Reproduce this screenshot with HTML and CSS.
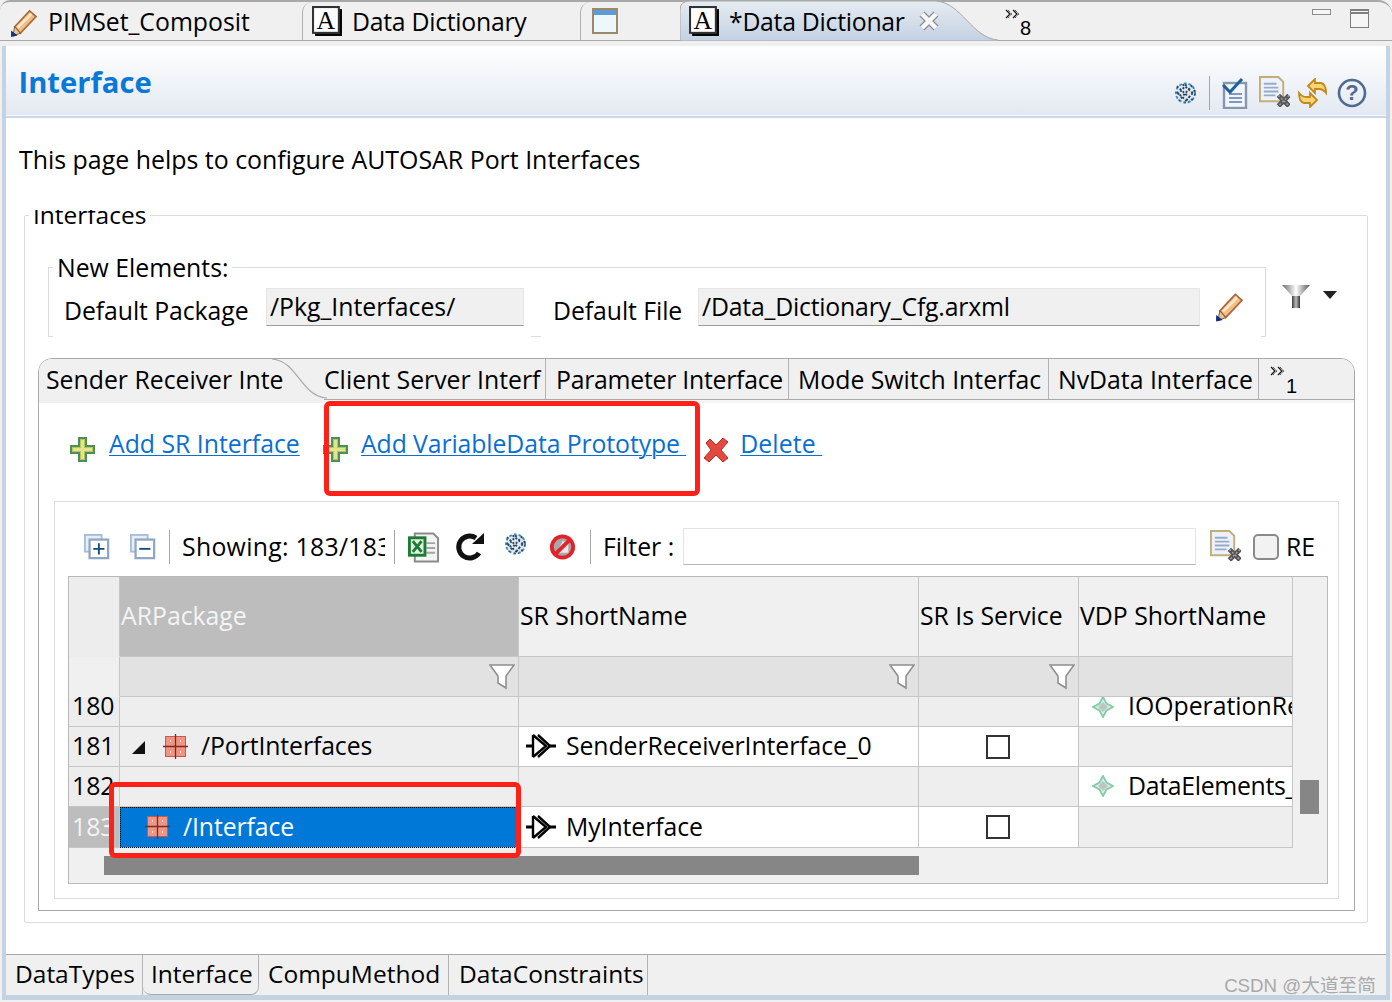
FILE: index.html
```html
<!DOCTYPE html>
<html lang="en">
<head>
<meta charset="utf-8">
<title>Interface</title>
<link rel="stylesheet" href="styles.css">
</head>
<body>
<svg class="defs" width="0" height="0" aria-hidden="true">
  <defs>
    <symbol id="pencil" viewBox="0 0 28 30">
      <path d="M4 19 L20 2 L27 8 L10 26 Z" fill="#f3bd83" stroke="#a8683c" stroke-width="1.800"/>
      <path d="M7 20 L22 5" stroke="#fde6c6" stroke-width="3"/>
      <path d="M4 19 L10 26 L2 29 Z" fill="#e8c690" stroke="#7a5a30"/>
      <path d="M1 29 L1 25 L5 28 Z" fill="#10307f" stroke="#10307f" stroke-width="1.800"/>
    </symbol>
    <symbol id="plus" viewBox="0 0 25 25">
      <path d="M9 1 h7 v8 h8 v7 h-8 v8 h-7 v-8 h-8 v-7 h8 Z" fill="#b9c65a" stroke="#4d8f5c" stroke-width="2"/>
      <path d="M12.500 3 v19 M3 12.500 h19" stroke="#e3e58e" stroke-width="3"/>
    </symbol>
    <symbol id="grid" viewBox="0 0 25 25">
      <rect x="2" y="2" width="21" height="21" fill="#c9584d"/>
      <rect x="3" y="3" width="9" height="9" fill="#ef9583"/>
      <rect x="13" y="3" width="9" height="9" fill="#ef9583"/>
      <rect x="3" y="13" width="9" height="9" fill="#ef9583"/>
      <rect x="13" y="13" width="9" height="9" fill="#ef9583"/>
      <path d="M7 7 h1 M17 7 h1 M7 18 h1 M17 18 h1" stroke="#fde0d2" stroke-width="2"/>
      <path d="M12.500 0 V25 M0 12.500 H25" stroke="#7c2a22" stroke-width="1.300"/>
    </symbol>
    <symbol id="port" viewBox="0 0 30 26">
      <path d="M0 13 H7 M22 13 H30" stroke="#000" stroke-width="3"/>
      <path d="M7 2 V24 M7 2 L20 13 L7 24" fill="#fff" stroke="#000" stroke-width="2.400"/>
      <path d="M12 2 L24 13 L12 24" fill="none" stroke="#000" stroke-width="2.400"/>
    </symbol>
    <symbol id="diamond" viewBox="0 0 22 22">
      <path d="M11 1 L14.500 7.500 L21 11 L14.500 14.500 L11 21 L7.500 14.500 L1 11 L7.500 7.500 Z" fill="#e4ebe7" stroke="#7fcfa8" stroke-width="1.800"/>
      <path d="M11 6 L16 11 L11 16 L6 11 Z" fill="#bcc7c0"/>
    </symbol>
    <symbol id="funnel" viewBox="0 0 26 26">
      <path d="M1 1 H25 L17 12 V24 L9 19 V12 Z" fill="#fff" stroke="#8f8f8f" stroke-width="1.600"/>
    </symbol>
    <symbol id="docx" viewBox="0 0 32 32">
      <path d="M1 1 H20 L25 6 V26 H1 Z" fill="#eef2f8" stroke="#c2ad7d" stroke-width="2"/>
      <path d="M5 8 H18 M5 12 H20 M5 16 H20 M5 20 H17" stroke="#98aacb" stroke-width="2"/>
      <path d="M20 20 L31 31 M31 20 L20 31" stroke="#555" stroke-width="5"/>
      <path d="M20 20 L31 31 M31 20 L20 31" stroke="#a0a0a0" stroke-width="1.500" stroke-dasharray="2 2"/>
    </symbol>
    <symbol id="dots" viewBox="0 0 24 24">
      <circle cx="12" cy="12" r="10" fill="#dfe9ef" stroke="#3f8fc4" stroke-width="2" stroke-dasharray="3 2"/>
      <path d="M3 5 L20 20 M9 3 L22 14 M3 11 L15 22 M19 4 L5 20 M13 3 L3 15 M22 9 L11 22" stroke="#27415f" stroke-width="2" stroke-dasharray="2 2"/>
    </symbol>
    <symbol id="chev" viewBox="0 0 15 10">
      <path d="M1 1 L5 5 L1 9 M8 1 L12 5 L8 9" fill="none" stroke="#111" stroke-width="1.200"/>
      <path d="M3 1 L7 5 L3 9 M10 1 L14 5 L10 9" fill="none" stroke="#111" stroke-width="1" stroke-dasharray="1 1"/>
    </symbol>
  </defs>
</svg>

<div class="app">
  <header class="topbar">
    <div class="etab etab-1">
      <svg class="ico-26"><use href="#pencil"/></svg>
      <span class="ttext">PIMSet_Composit</span>
    </div>
    <div class="etab etab-2">
      <svg class="ico-a" viewBox="0 0 30 30"><rect x="3" y="3" width="26" height="26" fill="#000"/><rect x="1" y="1" width="25" height="25" fill="#fff" stroke="#333" stroke-width="2"/><text x="13.500" y="22" class="a-glyph">A</text></svg>
      <span class="ttext ttext-dd">Data Dictionary</span>
    </div>
    <div class="etab etab-3">
      <svg class="ico-win" viewBox="0 0 26 26"><rect x="1" y="1" width="24" height="24" fill="#eef7fc" stroke="#9a8a68" stroke-width="2"/><rect x="2" y="2" width="22" height="5" fill="#5c9bd6"/></svg>
    </div>
    <div class="etab etab-active">
      <svg class="active-shape" viewBox="0 0 320 41" preserveAspectRatio="none"><defs><linearGradient id="ag" x1="0" y1="0" x2="0" y2="1"><stop offset="0" stop-color="#e6ecf2"/><stop offset="1" stop-color="#c3d1e2"/></linearGradient></defs><path d="M0 41 V10 Q0 1 10 1 H256 C282 3 292 38 318 40 V41 Z" fill="url(#ag)" stroke="#a8a8a8"/></svg>
      <svg class="ico-a" viewBox="0 0 30 30"><rect x="3" y="3" width="26" height="26" fill="#000"/><rect x="1" y="1" width="25" height="25" fill="#fff" stroke="#333" stroke-width="2"/><text x="13.500" y="22" class="a-glyph">A</text></svg>
      <span class="ttext ttext-dd">*Data Dictionar</span>
      <svg class="ico-close" viewBox="0 0 20 20"><path d="M3 3 L17 17 M17 3 L3 17" stroke="#8d8d8d" stroke-width="7"/><path d="M3 3 L17 17 M17 3 L3 17" stroke="#f8f8f8" stroke-width="4.500"/></svg>
    </div>
    <div class="more more-top"><svg class="chev"><use href="#chev"/></svg><span class="num">8</span></div>
    <div class="winctl">
      <span class="min-btn"></span>
      <span class="max-btn"></span>
    </div>
  </header>

  <main class="editor">
    <section class="formhead">
      <h1 class="title">Interface</h1>
      <div class="headtools">
        <svg class="ico-24"><use href="#dots"/></svg>
        <span class="vsep"></span>
        <svg class="ico-task" viewBox="0 0 26 32"><rect x="2" y="6" width="22" height="25" fill="#f2f5fa" stroke="#8797ae" stroke-width="2.400"/><path d="M7 17 H20 M7 21 H20 M7 25 H20" stroke="#7c9ac2" stroke-width="2"/><path d="M1 8 L8 15 L20 2" fill="none" stroke="#1f5f9c" stroke-width="3"/></svg>
        <svg class="ico-doc"><use href="#docx"/></svg>
        <svg class="ico-sync" viewBox="0 0 29 30"><path d="M10 8 L17 1 V5 H23 Q28 6 28 15 Q25 11 21 11 H17 V15 Z" fill="#f8d675" stroke="#c28a1d" stroke-width="1.800"/><path d="M19 22 L12 29 V25 H6 Q1 24 1 15 Q4 19 8 19 H12 V15 Z" fill="#f8d675" stroke="#c28a1d" stroke-width="1.800"/></svg>
        <svg class="ico-help" viewBox="0 0 30 30"><circle cx="15" cy="15" r="13" fill="none" stroke="#4f6b92" stroke-width="2.600"/><text x="15" y="22" class="help-glyph">?</text></svg>
      </div>
    </section>

    <section class="formbody">
      <p class="desc">This page helps to configure AUTOSAR Port Interfaces</p>

      <fieldset class="group">
        <legend class="group-title"><span class="group-text">Interfaces</span></legend>
        <div class="newrow">
          <fieldset class="newbox">
            <legend class="new-title">New Elements:</legend>
            <div class="newfields">
              <span class="lbl lbl-pkg">Default Package</span>
              <span class="field field-pkg">/Pkg_Interfaces/</span>
              <span class="lbl lbl-file">Default File</span>
              <span class="field field-file">/Data_Dictionary_Cfg.arxml</span>
              <svg class="ico-pencil2"><use href="#pencil"/></svg>
            </div>
          </fieldset>
          <div class="filterbtn">
            <svg class="ico-filter" viewBox="0 0 28 24"><defs><linearGradient id="fg" x1="0" y1="0" x2="1" y2="0"><stop offset="0" stop-color="#666"/><stop offset=".5" stop-color="#fff"/><stop offset="1" stop-color="#555"/></linearGradient><linearGradient id="fs" x1="0" y1="0" x2="1" y2="0"><stop offset="0" stop-color="#3d3d3d"/><stop offset=".5" stop-color="#bbb"/><stop offset="1" stop-color="#333"/></linearGradient></defs><path d="M0 0 H28 L18 11 H10 Z" fill="url(#fg)"/><rect x="10" y="11" width="8" height="12" fill="url(#fs)"/></svg>
            <span class="caret"></span>
          </div>
        </div>

        <div class="tabfolder">
          <div class="tabstrip">
            <div class="itab itab-active">Sender Receiver Inte
              <svg class="curve" viewBox="0 0 55 41" preserveAspectRatio="none"><path d="M0 1 C26 3 28 38 55 40" fill="none" stroke="#a8a8a8" stroke-width="1.200"/></svg>
            </div>
            <div class="itab itab-c">Client Server Interf</div>
            <div class="itab itab-p">Parameter Interface</div>
            <div class="itab itab-m">Mode Switch Interfac</div>
            <div class="itab itab-n">NvData Interface</div>
            <div class="more more-in"><svg class="chev"><use href="#chev"/></svg><span class="num">1</span></div>
          </div>

          <div class="tabpanel">
            <div class="links">
              <svg class="ico-plus"><use href="#plus"/></svg>
              <a class="lnk lnk-sr" href="#">Add SR Interface</a>
              <svg class="ico-plus plus-2"><use href="#plus"/></svg>
              <a class="lnk lnk-vd" href="#">Add VariableData Prototype&nbsp;</a>
              <svg class="ico-del" viewBox="0 0 26 26"><path d="M3 6 L7 2 L13 8 L20 1 L25 5 L18 13 L25 21 L20 25 L13 18 L6 25 L1 21 L8 13 Z" fill="#e24a3f" stroke="#b92a22"/></svg>
              <a class="lnk lnk-del" href="#">Delete&nbsp;</a>
            </div>

            <div class="tablebox">
              <div class="tbar">
                <svg class="ico-exp" viewBox="0 0 28 28"><rect x="1" y="1" width="18" height="18" fill="#e6eef8" stroke="#a8bdd6" stroke-width="2"/><rect x="6" y="6" width="20" height="20" fill="#fff" stroke="#8ea6c2" stroke-width="2.400"/><path d="M16 10 V22 M10 16 H22" stroke="#134a7c" stroke-width="2"/></svg>
                <svg class="ico-col" viewBox="0 0 28 28"><rect x="1" y="1" width="18" height="18" fill="#e6eef8" stroke="#a8bdd6" stroke-width="2"/><rect x="6" y="6" width="20" height="20" fill="#fff" stroke="#8ea6c2" stroke-width="2.400"/><path d="M10 16 H22" stroke="#134a7c" stroke-width="2"/></svg>
                <span class="tsep sep-a"></span>
                <span class="showing">Showing: 183/183</span>
                <span class="tsep sep-b"></span>
                <svg class="ico-xl" viewBox="0 0 34 32"><path d="M8 2 H27 L32 7 V31 H8 Z" fill="#f4f4f4" stroke="#8a8a8a" stroke-width="2"/><path d="M20 12 H29 M20 17 H29 M20 22 H29" stroke="#a5a5a5" stroke-width="2"/><rect x="1" y="5" width="19" height="21" fill="#1e7b34"/><rect x="4" y="8" width="13" height="15" fill="#dff1e0"/><path d="M6 10 L15 21 M15 10 L6 21" stroke="#1e7b34" stroke-width="3"/></svg>
                <svg class="ico-ref" viewBox="0 0 30 30"><path d="M24 21 A11 11 0 1 1 21 6" fill="none" stroke="#111" stroke-width="5"/><path d="M17 12 H29 V1 Z" fill="#111"/></svg>
                <svg class="ico-dots"><use href="#dots"/></svg>
                <svg class="ico-stop" viewBox="0 0 28 28"><rect x="5" y="4" width="18" height="20" fill="#a8a8a8"/><path d="M8 20 L14 8 H20 V20 Z" fill="#e8e8e8"/><circle cx="14" cy="14" r="11" fill="none" stroke="#e2242a" stroke-width="4"/><path d="M6 22 L22 6" stroke="#e2242a" stroke-width="4"/></svg>
                <span class="tsep sep-c"></span>
                <span class="filterlbl">Filter :</span>
                <span class="filterinput"></span>
                <svg class="ico-doc2"><use href="#docx"/></svg>
                <span class="cbox"></span>
                <span class="re">RE</span>
              </div>

              <div class="gridwrap">
                <div class="datagrid">
                  <div class="c rh hdr"></div>
                  <div class="c hdr hdr-sel">ARPackage</div>
                  <div class="c hdr">SR ShortName</div>
                  <div class="c hdr">SR Is Service</div>
                  <div class="c hdr">VDP ShortName</div>

                  <div class="c rh flt"></div>
                  <div class="c flt"><svg class="ico-fn"><use href="#funnel"/></svg></div>
                  <div class="c flt"><svg class="ico-fn"><use href="#funnel"/></svg></div>
                  <div class="c flt"><svg class="ico-fn"><use href="#funnel"/></svg></div>
                  <div class="c flt"></div>

                  <div class="c rh row-cut"><span class="cut">180</span></div>
                  <div class="c row-cut"></div>
                  <div class="c row-cut"></div>
                  <div class="c row-cut"></div>
                  <div class="c row-cut wh"><svg class="ico-dia"><use href="#diamond"/></svg><span class="cut cut-vdp">IOOperationRes</span></div>

                  <div class="c rh">181</div>
                  <div class="c"><span class="tri"></span><svg class="ico-grid"><use href="#grid"/></svg><span class="cname">/PortInterfaces</span></div>
                  <div class="c wh"><svg class="ico-port"><use href="#port"/></svg><span class="pname">SenderReceiverInterface_0</span></div>
                  <div class="c wh center"><span class="chk"></span></div>
                  <div class="c"></div>

                  <div class="c rh">182</div>
                  <div class="c"></div>
                  <div class="c"></div>
                  <div class="c"></div>
                  <div class="c wh"><svg class="ico-dia"><use href="#diamond"/></svg><span class="vname">DataElements_</span></div>

                  <div class="c rh rh-sel">183</div>
                  <div class="c sel"><svg class="ico-grid grid-sel"><use href="#grid"/></svg><span class="cname">/Interface</span></div>
                  <div class="c wh"><svg class="ico-port"><use href="#port"/></svg><span class="pname">MyInterface</span></div>
                  <div class="c wh center"><span class="chk"></span></div>
                  <div class="c"></div>
                </div>
                <div class="vthumb"></div>
                <div class="hthumb"></div>
              </div>
            </div>
          </div>
        </div>
      </fieldset>
    </section>

    <footer class="pagetabs">
      <div class="ptab ptab-dt">DataTypes</div>
      <div class="ptab ptab-if">Interface</div>
      <div class="ptab ptab-cm">CompuMethod</div>
      <div class="ptab ptab-dc">DataConstraints</div>
    </footer>
  </main>

  <div class="redbox red-1"></div>
  <div class="redbox red-2"></div>
  <div class="watermark">CSDN @大道至简</div>
</div>
</body>
</html>
```
FILE: styles.css
```css
* { box-sizing: border-box; }
html, body { margin: 0; padding: 0; }
body { background: #f0f0f0; overflow: hidden; }
.defs { position: absolute; }
svg { display: block; flex: none; }

.app {
  position: relative;
  width: 1392px;
  height: 1002px;
  background: #f0f0f0;
  color: #000;
  font-family: "Open Sans", "Noto Sans", sans-serif;
  font-size: 24.8px;
  line-height: 1.2;
  display: flex;
  flex-direction: column;
  overflow: hidden;
  white-space: nowrap;
}

/* top editor tabs */
.topbar {
  height: 41px;
  flex: none;
  display: flex;
  align-items: center;
  border-top: 2px solid #a8a8a8;
  border-bottom: 1px solid #a8a8a8;
  border-top-left-radius: 10px;
  border-top-right-radius: 14px;
  position: relative;
}
.etab {
  height: 38px;
  display: flex;
  align-items: center;
  position: relative;
  flex: none;
  border-left: 1px solid #b0b0b0;
  border-top-left-radius: 10px;
}
.etab-1 { width: 302px; padding-left: 11px; border-left: 0; }
.etab-2 { width: 278px; padding-left: 9px; }
.etab-3 { width: 100px; padding-left: 11px; }
.etab-active { width: 318px; padding-left: 9px; border-left: 0; }
.active-shape { position: absolute; left: 0; top: -2px; width: 320px; height: 41px; }
.etab-active > :not(.active-shape) { position: relative; }
.ico-26 { width: 26px; height: 30px; margin-right: 11px; margin-top: 3px; }
.ico-a { width: 31px; height: 31px; margin-right: 9px; }
.a-glyph { font-family: "Liberation Serif", serif; font-size: 25px; text-anchor: middle; fill: #000; }
.ico-win { width: 26px; height: 26px; }
.ico-close { width: 20px; height: 20px; margin-left: 14px; }
.ttext { display: block; padding-top: 2px; }
.ttext-dd { letter-spacing: -.27px; }
.more { position: relative; flex: none; }
.chev { position: absolute; left: 0; top: 7px; width: 15px; height: 10px; }
.num { position: absolute; left: 15px; top: 15px; font-size: 20px; line-height: 22px; font-family: "Liberation Sans", sans-serif; }
.more-top { width: 60px; height: 38px; margin-left: 7px; }
.winctl { margin-left: auto; display: flex; align-items: flex-start; gap: 19px; padding-right: 23px; align-self: flex-start; padding-top: 7px; }
.min-btn { width: 19px; height: 6px; border: 1px solid #8c8c8c; background: #f6f6f6; }
.max-btn { width: 19px; height: 19px; border: 1px solid #7f7f7f; border-top-width: 5px; border-top-style: double; background: #f6f6f6; }

/* editor body */
.editor {
  margin: 5px 2px 2px 2px;
  flex: 1;
  min-height: 0;
  border: 4px solid #c5d2e2;
  border-top: 0;
  border-bottom-width: 5px;
  background: #fff;
  display: flex;
  flex-direction: column;
}
.formhead {
  height: 72px;
  flex: none;
  background: linear-gradient(#fff 0, #e3e9f2 100%);
  border-bottom: 2px solid #cbd8e8;
  box-shadow: inset 0 -1px 0 #f6f8fb;
  display: flex;
  align-items: center;
  justify-content: space-between;
  padding: 0 19px 0 12.500px;
}
.title {
  margin: 3px 0 0;
  font-family: "Open Sans", sans-serif;
  font-size: 29.200px;
  font-weight: 700;
  color: #0a78d7;
}
.headtools { display: flex; align-items: center; padding-top: 24px; }
.ico-24 { width: 23px; height: 24px; }
.vsep { width: 1px; height: 34px; background: #a6a6a6; margin: 0 12px; }
.ico-task { width: 26px; height: 32px; margin-right: 11px; }
.ico-doc { width: 31px; height: 31px; margin-right: 8px; margin-top: -4px; }
.ico-sync { width: 29px; height: 30px; margin-right: 10px; }
.ico-help { width: 30px; height: 30px; margin-top: -1px; }
.help-glyph { font-family: "Liberation Sans", sans-serif; font-size: 22px; font-weight: 700; text-anchor: middle; fill: #4f6b92; }

.formbody { flex: 1; min-height: 0; padding: 0; position: relative; }
.desc { margin: 0; padding: 27px 0 0 13px; height: 82px; font-size: 24.920px; }

.group {
  margin: 10px 0 0 18px;
  width: 1344px;
  height: 713px;
  padding: 0;
  border: 1px solid #dcdcdc;
  border-radius: 2px;
  position: relative;
}
.group-title {
  padding: 0 4px;
  margin-left: 4px;
  height: 10px;
  line-height: 24px;
  clip-path: inset(0 0 -12px 0);
  font-size: 24.500px;
}
.group-text { display: block; margin-top: -7px; }
.newrow { display: flex; align-items: flex-start; padding: 33px 0 0 23px; height: 138px; }
.newbox {
  width: 1218px;
  height: 84px;
  margin: 0;
  padding: 0;
  border: 1px solid #dcdcdc;
  border-bottom: 0;
  background:
    linear-gradient(#dcdcdc, #dcdcdc) left bottom / 4px 1px no-repeat,
    linear-gradient(#dcdcdc, #dcdcdc) right bottom / 4px 1px no-repeat,
    linear-gradient(#dcdcdc, #dcdcdc) 482px bottom / 10px 1px no-repeat;
}
.new-title { padding: 0 4px; margin-left: 4px; line-height: 28px; height: 28px; }
.newfields { display: flex; align-items: center; height: 38px; padding-left: 15px; margin-top: 7px; }
.lbl { margin-top: 8px; letter-spacing: -.07px; }
.lbl-pkg { width: 202px; }
.lbl-file { margin-left: 29px; width: 145px; }
.field { height: 38px; background: #f0f0f0; border: 1px solid #e6e6e6; border-bottom: 1px solid #9a9a9a; padding: 0 3px; line-height: 35px; }
.field-pkg { width: 258px; }
.field-file { width: 502px; letter-spacing: -.2px; }
.ico-pencil2 { width: 27px; height: 30px; margin-left: 16px; }
.filterbtn { display: flex; align-items: center; margin-left: 16px; margin-top: 32px; }
.ico-filter { width: 28px; height: 24px; }
.caret { margin-left: 13px; margin-top: -4px; width: 0; height: 0; border-left: 7px solid transparent; border-right: 7px solid transparent; border-top: 8px solid #222; }

.tabfolder {
  margin-left: 13px;
  width: 1317px;
  height: 553px;
  border: 1px solid #a8a8a8;
  border-top-left-radius: 14px;
  border-top-right-radius: 14px;
  display: flex;
  flex-direction: column;
  overflow: hidden;
  background: #fff;
}
.tabstrip {
  height: 41px;
  flex: none;
  display: flex;
  background: #f0f0f0;
  border-bottom: 1px solid #a8a8a8;
}
.itab { height: 40px; padding-top: 6px; flex: none; border-right: 1px solid #b4b4b4; position: relative; }
.itab-active { width: 285px; padding-left: 7px; border-right: 0; z-index: 1; background: #f0f0f0; height: 44px; }
.curve { position: absolute; right: -3px; top: -1px; width: 55px; height: 41px; }
.itab-c { width: 222px; }
.itab-p { width: 243px; padding-left: 10px; letter-spacing: -.25px; }
.itab-m { width: 260px; padding-left: 9px; }
.itab-n { width: 210px; padding-left: 9px; }
.more-in { width: 60px; height: 40px; margin-left: 11px; }
.more-in .num { left: 16px; top: 16px; }
.tabpanel { flex: 1; min-height: 0; padding: 0 15px; }
.links { height: 101px; display: flex; align-items: flex-start; padding-top: 28px; margin: 0 -15px; padding-left: 15px; border-top: 3px solid #f6f6f6; }
.lnk { color: #0a6fd1; text-decoration: underline; text-underline-offset: 2px; text-decoration-thickness: 1px; line-height: 30px; margin-top: -3px; }
.ico-plus { width: 25px; height: 25px; margin-left: 16px; margin-top: 6px; margin-right: 14px; }
.plus-2 { margin-left: 23px; margin-right: 13px; }
.lnk-vd { letter-spacing: -.1px; }
.ico-del { width: 26px; height: 26px; margin-left: 17px; margin-right: 11px; margin-top: 6px; }
.lnk-del { letter-spacing: .1px; }
.lnk-sr { width: 191px; }

.tablebox {
  height: 398px;
  border: 1px solid #dedede;
  padding: 0 0 0 13px;
}
.tbar { height: 74px; display: flex; align-items: center; padding: 16px 0 0 16px; }
.ico-exp { width: 26px; height: 26px; }
.ico-col { width: 26px; height: 26px; margin-left: 20px; }
.tsep { width: 1px; height: 34px; background: #a6a6a6; flex: none; }
.sep-a { margin-left: 13px; }
.showing { width: 203px; margin-left: 12px; overflow: hidden; letter-spacing: .3px; }
.sep-b { margin-left: 9px; }
.ico-xl { width: 33px; height: 32px; margin-left: 12px; }
.ico-ref { width: 30px; height: 30px; margin-left: 15px; }
.ico-dots { width: 23px; height: 24px; margin-left: 19px; margin-top: -6px; }
.ico-stop { width: 27px; height: 28px; margin-left: 22px; }
.sep-c { margin-left: 14px; }
.filterlbl { margin-left: 12px; width: 80px; }
.filterinput { width: 513px; height: 37px; background: #fff; border: 1px solid #e4e4e4; border-bottom: 1px solid #b5b5b5; margin-top: -2px; }
.ico-doc2 { width: 31px; height: 31px; margin-left: 14px; margin-top: -4px; }
.cbox { width: 26px; height: 26px; margin-left: 12px; border: 2px solid #8a8a8a; border-radius: 5px; background: #f2f2f2; }
.re { margin-left: 7px; }

.gridwrap {
  position: relative;
  width: 1260px;
  height: 308px;
  border: 1px solid #b9b9b9;
  background: #f0f0f0;
  overflow: hidden;
}
.datagrid {
  display: grid;
  grid-template-columns: 51px 399px 400px 160px 214px;
  grid-template-rows: 80px 40px 30px 40px 40px 41px;
  width: 1224px;
}
.c {
  border-right: 1px solid #c6c6c6;
  border-bottom: 1px solid #c6c6c6;
  background: #eeeeee;
  display: flex;
  align-items: center;
  overflow: hidden;
  position: relative;
  padding-bottom: 1px;
}
.hdr { padding-left: 1px; background: #f0f0f0; border-bottom-color: #c6c6c6; }
.hdr-sel { background: #bdbdbd; color: #f4f4f4; }
.flt { background: #e2e2e2; justify-content: flex-end; padding-bottom: 0; }
.rh.flt { background: #f0f0f0; border-bottom-color: transparent; }
.rh.hdr { border-bottom-color: transparent; }
.ico-fn { width: 26px; height: 26px; margin-right: 3px; }
.rh { padding-left: 3px; background: #ededed; }
.wh { background: #fff; }
.center { justify-content: center; padding-bottom: 0; padding-right: 2px; }
.row-cut { align-items: flex-start; padding-bottom: 0; }
.cut { margin-top: -6px; }
.cut-vdp { position: absolute; left: 49px; top: 0; }
.ico-dia { width: 22px; height: 22px; margin-left: 13px; flex: none; }
.row-cut .ico-dia { margin-top: -1px; }
.tri { width: 0; height: 0; margin-left: 12px; border-left: 13px solid transparent; border-bottom: 13px solid #111; margin-top: 3px; }
.ico-grid { width: 25px; height: 25px; margin-left: 18px; }
.cname { margin-left: 13px; letter-spacing: -.1px; }
.ico-port { width: 30px; height: 26px; margin-left: 7px; }
.pname { margin-left: 10px; letter-spacing: -.08px; }
.vname { margin-left: 14px; letter-spacing: -.3px; }
.chk { width: 24px; height: 24px; border: 2px solid #333; background: #fff; }
.sel { background: #0078d7; color: #fff; outline: 1px dotted #000; outline-offset: -1px; }
.grid-sel { margin-left: 25px; }
.rh-sel { background: #bdbdbd; color: #f4f4f4; }
.vthumb { position: absolute; left: 1231px; top: 203px; width: 19px; height: 34px; background: #868686; }
.hthumb { position: absolute; left: 35px; top: 279px; width: 815px; height: 19px; background: #868686; }

/* bottom page tabs */
.pagetabs {
  margin-top: auto;
  height: 41px;
  flex: none;
  display: flex;
  background: #f0f0f0;
  border-top: 1px solid #a8a8a8;
  padding-top: 0;
  font-size: 24.500px;
}
.ptab { height: 40px; padding-left: 9px; padding-top: 4px; border-right: 1px solid #b4b4b4; flex: none; }
.ptab-dt { width: 137px; padding-left: 9px; }
.ptab-if { width: 116px; padding-left: 8px; padding-top: 5px; border-bottom: 1px solid #a8a8a8; border-radius: 0 0 8px 8px; margin-top: -1px; height: 41px; }
.ptab-cm { width: 190px; }
.ptab-dc { width: 199px; padding-left: 10px; }

/* overlays */
.redbox { position: absolute; border: 5px solid #ff2018; border-radius: 6px; }
.red-1 { left: 324px; top: 401px; width: 376px; height: 95px; }
.red-2 { left: 109px; top: 782px; width: 412px; height: 76px; }
.watermark {
  position: absolute;
  right: 16px;
  bottom: 5px;
  font-family: "Liberation Sans", "Noto Sans CJK SC", sans-serif;
  font-size: 18.700px;
  color: #a9a9a9;
}
```
